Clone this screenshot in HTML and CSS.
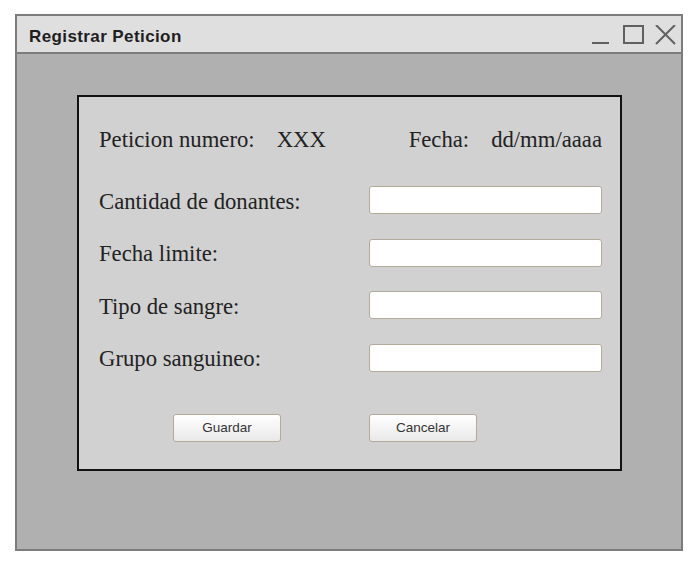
FILE: index.html
```html
<!DOCTYPE html>
<html lang="es">
<head>
<meta charset="utf-8">
<title>Registrar Peticion</title>
<link rel="stylesheet" href="styles.css">
</head>
<body>
<div class="window">
  <div class="titlebar">
    <span class="title">Registrar Peticion</span>
    <div class="controls">
      <svg class="ctl" width="20" height="20" viewBox="0 0 20 20"><line x1="2" y1="18" x2="19" y2="18"/></svg>
      <svg class="ctl" width="22" height="20" viewBox="0 0 22 20"><rect x="2" y="1" width="19" height="17"/></svg>
      <svg class="ctl" width="22" height="20" viewBox="0 0 22 20"><line x1="2" y1="0" x2="21" y2="19"/><line x1="21" y1="0" x2="2" y2="19"/></svg>
    </div>
  </div>
  <div class="body">
    <div class="panel">
      <div class="header">
        <div class="pair"><span>Peticion numero:</span><span>XXX</span></div>
        <div class="pair"><span>Fecha:</span><span>dd/mm/aaaa</span></div>
      </div>
      <div class="form">
        <label class="lbl">Cantidad de donantes:</label><input class="field" type="text">
        <label class="lbl">Fecha limite:</label><input class="field" type="text">
        <label class="lbl">Tipo de sangre:</label><input class="field" type="text">
        <label class="lbl">Grupo sanguineo:</label><input class="field" type="text">
      </div>
      <div class="actions">
        <button class="btn btn-save">Guardar</button>
        <button class="btn">Cancelar</button>
      </div>
    </div>
  </div>
</div>
</body>
</html>
```

FILE: styles.css
```css
html, body {
  margin: 0;
  padding: 0;
  background: #ffffff;
}

.window {
  margin: 14px 0 0 15px;
  width: 668px;
  height: 537px;
  box-sizing: border-box;
  border: 2px solid #7c7c7c;
  display: flex;
  flex-direction: column;
  background: #b0b0b0;
}

.titlebar {
  height: 36px;
  background: #dfdfdf;
  border-bottom: 2px solid #7c7c7c;
  display: flex;
  align-items: center;
  justify-content: space-between;
  padding: 0 5px 0 12px;
}

.title {
  font-family: "Liberation Sans", Arial, sans-serif;
  font-weight: bold;
  font-size: 17px;
  letter-spacing: 0.4px;
  color: #1e1e1e;
  padding-top: 5px;
}

.controls {
  display: flex;
  align-items: center;
  margin-top: 2px;
}

.ctl {
  display: block;
  fill: none;
  stroke: #606060;
  stroke-width: 2;
}

.controls .ctl + .ctl {
  margin-left: 10px;
}

.controls .ctl:nth-child(2) {
  margin-left: 12px;
}

.body {
  flex: 1;
  padding: 41px 0 0 60px;
}

.panel {
  width: 545px;
  height: 376px;
  box-sizing: border-box;
  border: 2px solid #111111;
  background: #d1d1d1;
  padding: 31px 18px 0 20px;
  font-family: "Liberation Serif", "Times New Roman", serif;
  font-size: 22.7px;
  color: #222222;
}

.header {
  height: 24px;
  display: flex;
  justify-content: space-between;
  align-items: center;
  line-height: 24px;
}

.pair {
  display: flex;
  gap: 22px;
}

.form {
  margin-top: 34px;
  display: grid;
  grid-template-columns: 270px 1fr;
  grid-auto-rows: 28px;
  row-gap: 24.5px;
  align-items: center;
}

.lbl {
  line-height: 28px;
  padding-top: 3px;
}

.field {
  height: 28px;
  box-sizing: border-box;
  margin: 0;
  border: 1px solid #b4aa9c;
  border-radius: 3px;
  background: #ffffff;
}

.actions {
  margin-top: 42px;
  display: grid;
  grid-template-columns: 270px 1fr;
}

.btn {
  width: 108px;
  height: 28px;
  box-sizing: border-box;
  margin: 0;
  border: 1px solid #b4aa9c;
  border-radius: 3px;
  background: linear-gradient(#ffffff, #e9e9e9);
  font-family: "Liberation Sans", Arial, sans-serif;
  font-size: 13.5px;
  color: #333333;
  padding: 0;
}

.btn-save {
  margin-left: 74px;
}
```
